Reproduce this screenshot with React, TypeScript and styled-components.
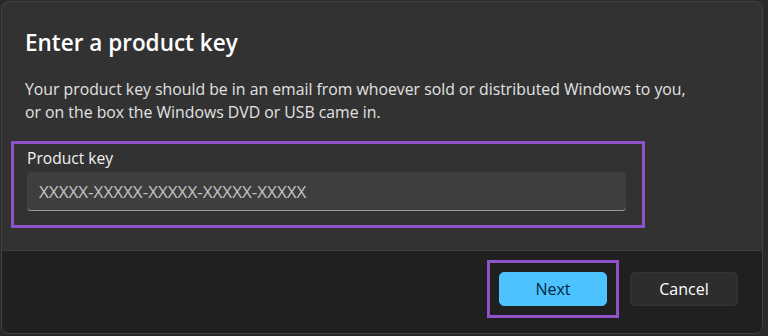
import React from 'react';
import styled, { createGlobalStyle } from 'styled-components';

const GlobalStyle = createGlobalStyle`
  html, body {
    margin: 0;
    padding: 0;
    background: #2a2a2a;
  }
  body {
    font-family: 'Open Sans', 'Noto Sans', sans-serif;
    -webkit-font-smoothing: antialiased;
  }
`;

const Accent = '#8e52c9';

export default function App() {
  return (
    <>
      <GlobalStyle />
      <Dialog>
        <Content>
          <Title>Enter a product key</Title>
          <Description>
            Your product key should be in an email from whoever sold or distributed Windows to you,
            <br />
            or on the box the Windows DVD or USB came in.
          </Description>
          <Highlight>
            <Label htmlFor="product-key">Product key</Label>
            <KeyInput id="product-key" placeholder="XXXXX-XXXXX-XXXXX-XXXXX-XXXXX" />
          </Highlight>
        </Content>
        <Footer>
          <ButtonHighlight>
            <Button $primary>Next</Button>
          </ButtonHighlight>
          <Button>Cancel</Button>
        </Footer>
      </Dialog>
    </>
  );
}

const Dialog = styled.div`
  display: flex;
  flex-direction: column;
  width: 762px;
  height: 333px;
  margin: 1px 0 0 1px;
  border: 1px solid #414141;
  border-radius: 8px;
  overflow: hidden;
  box-sizing: border-box;
  background: #323232;
`;

const Content = styled.div`
  flex: 1;
  display: flex;
  flex-direction: column;
  align-items: flex-start;
  padding: 26px 23px 0;
  border-bottom: 1px solid #3e3e3e;
`;

const Title = styled.h1`
  margin: 0;
  font-size: 22.5px;
  line-height: 30px;
  font-weight: 600;
  color: #ffffff;
`;

const Description = styled.p`
  margin: 20px 0 0;
  font-size: 15.8px;
  line-height: 23px;
  color: #e2e2e2;
`;

const Highlight = styled.div`
  display: flex;
  flex-direction: column;
  margin: 17px 0 0 -14px;
  padding: 4px 16px 14px 13px;
  border: 3px solid ${Accent};
`;

const Label = styled.label`
  display: block;
  font-size: 15.6px;
  line-height: 20px;
  color: #f2f2f2;
`;

const KeyInput = styled.input`
  margin-top: 4px;
  width: 599px;
  height: 39px;
  box-sizing: border-box;
  padding: 0 12px;
  border: none;
  border-bottom: 1px solid #9a9a9a;
  border-radius: 4px;
  background: #3e3e3e;
  font-family: inherit;
  font-size: 17px;
  color: #ffffff;
  outline: none;

  &::placeholder {
    color: #c4c4c4;
  }
`;

const Footer = styled.div`
  height: 82px;
  display: flex;
  align-items: center;
  justify-content: flex-end;
  gap: 11px;
  padding: 0 24px 6px 0;
  box-sizing: border-box;
  background: #202020;
`;

const ButtonHighlight = styled.div`
  display: flex;
  padding: 9px;
  border: 3px solid ${Accent};
`;

const Button = styled.button<{ $primary?: boolean }>`
  width: 108px;
  height: 34px;
  border-radius: 5px;
  border: 1px solid ${({ $primary }) => ($primary ? '#4cc2ff' : '#353535')};
  background: ${({ $primary }) => ($primary ? '#4cc2ff' : '#2d2d2d')};
  color: ${({ $primary }) => ($primary ? '#00263d' : '#ffffff')};
  font-family: inherit;
  font-size: 16px;
  cursor: pointer;
`;
